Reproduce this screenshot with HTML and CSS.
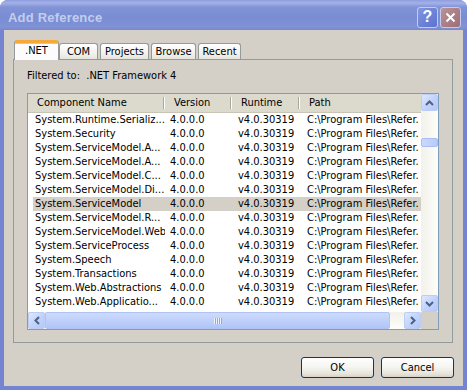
FILE: index.html
```html
<!DOCTYPE html>
<html lang="en">
<head>
    <meta charset="UTF-8">
    <title>Add Reference</title>
    <link rel="stylesheet" href="styles.css">
</head>
<body>
    <div class="window">
        <div class="titlebar">
            <span class="title">Add Reference</span>
            <div class="caption-btns">
                <span class="cap-btn help">?</span>
                <span class="cap-btn close">
                    <svg width="11" height="11" viewBox="0 0 11 11"><path d="M1.5 1.5 L9.5 9.5 M9.5 1.5 L1.5 9.5" stroke="#fff" stroke-width="2" fill="none"/></svg>
                </span>
            </div>
        </div>

        <div class="client">
            <div class="tabs">
                <div class="tab active">.NET</div>
                <div class="tab t-com">COM</div>
                <div class="tab t-projects">Projects</div>
                <div class="tab t-browse">Browse</div>
                <div class="tab t-recent">Recent</div>
            </div>

            <div class="panel">
                <div class="filter">Filtered to:&nbsp; .NET Framework 4</div>

                <div class="listbox">
                    <div class="list-view">
                        <div class="list-header">
                            <div class="hcell h-name">Component Name</div>
                            <div class="hcell h-version">Version</div>
                            <div class="hcell h-runtime">Runtime</div>
                            <div class="hcell h-path">Path</div>
                        </div>
                        <div class="rows">
                            <div class="row"><span class="cell c-name">System.Runtime.Serializ...</span><span class="cell c-version">4.0.0.0</span><span class="cell c-runtime">v4.0.30319</span><span class="cell c-path">C:\Program Files\Refer.</span></div>
                            <div class="row"><span class="cell c-name">System.Security</span><span class="cell c-version">4.0.0.0</span><span class="cell c-runtime">v4.0.30319</span><span class="cell c-path">C:\Program Files\Refer.</span></div>
                            <div class="row"><span class="cell c-name">System.ServiceModel.A...</span><span class="cell c-version">4.0.0.0</span><span class="cell c-runtime">v4.0.30319</span><span class="cell c-path">C:\Program Files\Refer.</span></div>
                            <div class="row"><span class="cell c-name">System.ServiceModel.A...</span><span class="cell c-version">4.0.0.0</span><span class="cell c-runtime">v4.0.30319</span><span class="cell c-path">C:\Program Files\Refer.</span></div>
                            <div class="row"><span class="cell c-name">System.ServiceModel.C...</span><span class="cell c-version">4.0.0.0</span><span class="cell c-runtime">v4.0.30319</span><span class="cell c-path">C:\Program Files\Refer.</span></div>
                            <div class="row"><span class="cell c-name">System.ServiceModel.Di...</span><span class="cell c-version">4.0.0.0</span><span class="cell c-runtime">v4.0.30319</span><span class="cell c-path">C:\Program Files\Refer.</span></div>
                            <div class="row selected"><span class="cell c-name">System.ServiceModel</span><span class="cell c-version">4.0.0.0</span><span class="cell c-runtime">v4.0.30319</span><span class="cell c-path">C:\Program Files\Refer.</span></div>
                            <div class="row"><span class="cell c-name">System.ServiceModel.R...</span><span class="cell c-version">4.0.0.0</span><span class="cell c-runtime">v4.0.30319</span><span class="cell c-path">C:\Program Files\Refer.</span></div>
                            <div class="row"><span class="cell c-name">System.ServiceModel.Web</span><span class="cell c-version">4.0.0.0</span><span class="cell c-runtime">v4.0.30319</span><span class="cell c-path">C:\Program Files\Refer.</span></div>
                            <div class="row"><span class="cell c-name">System.ServiceProcess</span><span class="cell c-version">4.0.0.0</span><span class="cell c-runtime">v4.0.30319</span><span class="cell c-path">C:\Program Files\Refer.</span></div>
                            <div class="row"><span class="cell c-name">System.Speech</span><span class="cell c-version">4.0.0.0</span><span class="cell c-runtime">v4.0.30319</span><span class="cell c-path">C:\Program Files\Refer.</span></div>
                            <div class="row"><span class="cell c-name">System.Transactions</span><span class="cell c-version">4.0.0.0</span><span class="cell c-runtime">v4.0.30319</span><span class="cell c-path">C:\Program Files\Refer.</span></div>
                            <div class="row"><span class="cell c-name">System.Web.Abstractions</span><span class="cell c-version">4.0.0.0</span><span class="cell c-runtime">v4.0.30319</span><span class="cell c-path">C:\Program Files\Refer.</span></div>
                            <div class="row"><span class="cell c-name">System.Web.Applicatio...</span><span class="cell c-version">4.0.0.0</span><span class="cell c-runtime">v4.0.30319</span><span class="cell c-path">C:\Program Files\Refer.</span></div>
                        </div>
                    </div>

                    <div class="vscroll">
                        <span class="sb-btn">
                            <svg width="9" height="6" viewBox="0 0 9 6"><path d="M1 5 L4.5 1.5 L8 5" stroke="#4d6185" stroke-width="2" fill="none"/></svg>
                        </span>
                        <div class="v-track"><span class="v-thumb"></span></div>
                        <span class="sb-btn">
                            <svg width="9" height="6" viewBox="0 0 9 6"><path d="M1 1 L4.5 4.5 L8 1" stroke="#4d6185" stroke-width="2" fill="none"/></svg>
                        </span>
                    </div>

                    <div class="hscroll">
                        <span class="sb-btn">
                            <svg width="6" height="9" viewBox="0 0 6 9"><path d="M5 1 L1.5 4.5 L5 8" stroke="#4d6185" stroke-width="2" fill="none"/></svg>
                        </span>
                        <span class="h-thumb"><span class="grip"></span></span>
                        <div class="h-track"></div>
                        <span class="sb-btn">
                            <svg width="6" height="9" viewBox="0 0 6 9"><path d="M1 1 L4.5 4.5 L1 8" stroke="#4d6185" stroke-width="2" fill="none"/></svg>
                        </span>
                    </div>

                    <div class="corner"></div>
                </div>
            </div>

            <div class="buttons">
                <button type="button" class="btn">OK</button>
                <button type="button" class="btn">Cancel</button>
            </div>
        </div>
    </div>
</body>
</html>
```

FILE: styles.css
```css
body {
    margin: 0;
    background-color: #ffffff;
    font-family: "DejaVu Sans Condensed", "Liberation Sans", sans-serif;
    font-size: 11px;
    color: #000000;
}

.window {
    width: 467px;
    height: 390px;
    display: flex;
    flex-direction: column;
    background-color: #7584d0;
    border-radius: 8px 8px 0 0;
    overflow: hidden;
}

/* title bar (inactive XP caption) */
.titlebar {
    height: 30px;
    box-sizing: border-box;
    padding: 4px 6px 0 8px;
    display: flex;
    align-items: center;
    justify-content: space-between;
    background: linear-gradient(to bottom, #8c9ddf 0, #a4b2e7 3px, #8294d7 7px, #7a8cd2 18px, #8193d7 27px, #7686d0 30px);
}
.title {
    font-family: "Liberation Sans", sans-serif;
    font-weight: bold;
    font-size: 13px;
    color: #c2cdf0;
    letter-spacing: 0.2px;
}
.caption-btns {
    display: flex;
    gap: 2px;
}
.cap-btn {
    width: 21px;
    height: 21px;
    box-sizing: border-box;
    border: 1px solid #c3ccee;
    border-radius: 3px;
    display: flex;
    align-items: center;
    justify-content: center;
}
.help {
    background: linear-gradient(135deg, #8396e0, #6a7fd6 60%, #5f74d0);
    color: #ffffff;
    font-family: "Liberation Sans", sans-serif;
    font-weight: bold;
    font-size: 16px;
}
.close {
    background: linear-gradient(135deg, #b8949a, #a87c82 60%, #9c6f76);
}

/* dialog body */
.client {
    flex: 1;
    margin: 0 4px 4px 4px;
    padding: 10px 9px 0 9px;
    background-color: #d4d0c8;
    display: flex;
    flex-direction: column;
}

.tabs {
    height: 19px;
    margin-left: 1px;
    display: flex;
    align-items: flex-end;
    position: relative;
    z-index: 1;
}
.tab {
    height: 16px;
    box-sizing: border-box;
    border: 1px solid #919b9c;
    border-bottom: none;
    border-radius: 3px 3px 0 0;
    background: linear-gradient(to bottom, #ffffff, #f3f2ee 60%, #e6e4dc);
    margin-right: 2px;
    text-align: center;
    line-height: 15px;
}
.tab.active {
    height: 20px;
    width: 45px;
    margin-right: 0;
    margin-bottom: -1px;
    border-top: 3px solid #f5a93a;
    background: #fcfcfe;
    line-height: 16px;
    box-shadow: inset 0 1px 0 #ffc83c;
}
.t-com { width: 39px; }
.t-projects { width: 49px; }
.t-browse { width: 45px; }
.t-recent { width: 43px; }

.panel {
    width: 440px;
    height: 284px;
    box-sizing: border-box;
    border: 1px solid #919b9c;
    padding: 9px 12px 0 13px;
    background-color: #d4d0c8;
}
.filter {
    line-height: 13px;
}

/* list view */
.listbox {
    margin-top: 11px;
    width: 412px;
    height: 237px;
    box-sizing: border-box;
    border: 1px solid #7f9db9;
    display: grid;
    grid-template-columns: 393px 17px;
    grid-template-rows: 218px 17px;
    background-color: #ffffff;
}
.list-view {
    overflow: hidden;
}
.list-header {
    height: 18px;
    display: flex;
    background-color: #dcd9cd;
    border-bottom: 1px solid #c9c5b6;
}
.hcell {
    padding-left: 9px;
    line-height: 18px;
    box-sizing: border-box;
    white-space: nowrap;
    background-image: linear-gradient(#aca899, #aca899), linear-gradient(#ffffff, #ffffff);
    background-size: 1px 12px, 1px 12px;
    background-position: right 1px top 3px, right 0 top 3px;
    background-repeat: no-repeat;
}
.h-name { width: 137px; }
.h-version { width: 67px; }
.h-runtime { width: 68px; }
.h-path { flex: 1; background-image: none; }

.row {
    height: 14px;
    margin-left: 5px;
    display: flex;
    line-height: 14px;
    white-space: nowrap;
}
.row.selected {
    background-color: #d4d0c8;
}
.cell {
    overflow: hidden;
    box-sizing: border-box;
}
.c-name { width: 132px; padding-left: 2px; }
.c-version { width: 67px; padding-left: 5px; }
.c-runtime { width: 68px; padding-left: 6px; }
.c-path { flex: 1; padding-left: 7px; }

/* scroll bars */
.sb-btn {
    width: 17px;
    height: 17px;
    box-sizing: border-box;
    border: 1px solid #bccdf4;
    border-radius: 2px;
    background: linear-gradient(135deg, #dfe8fe, #c3d3fc 50%, #b4c8f7);
    display: flex;
    align-items: center;
    justify-content: center;
    flex-shrink: 0;
}
.vscroll {
    display: flex;
    flex-direction: column;
    background: linear-gradient(to right, #f2f1ea, #fdfdfa);
}
.v-track {
    flex: 1;
}
.v-thumb {
    display: block;
    height: 9px;
    margin-top: 27px;
    box-sizing: border-box;
    border: 1px solid #a9bdf0;
    border-radius: 2px;
    background: linear-gradient(to right, #cad8fd, #b8cbf8);
}
.hscroll {
    display: flex;
    background: linear-gradient(to bottom, #f2f1ea, #fdfdfa);
}
.h-thumb {
    width: 345px;
    box-sizing: border-box;
    border: 1px solid #b0c4f4;
    border-radius: 2px;
    background: linear-gradient(to bottom, #cddafd, #bccefa 60%, #b1c5f6);
    display: flex;
    align-items: center;
    justify-content: center;
}
.grip {
    width: 8px;
    height: 6px;
    background: repeating-linear-gradient(90deg, #eef3ff 0 1px, #8ea6e4 1px 2px);
}
.h-track {
    flex: 1;
}
.corner {
    background-color: #d4d0c8;
}

/* dialog buttons */
.buttons {
    margin-top: 14px;
    display: flex;
    justify-content: flex-end;
    gap: 7px;
}
.btn {
    width: 73px;
    height: 21px;
    padding: 0;
    border: 1px solid #003c74;
    border-radius: 3px;
    background: linear-gradient(to bottom, #ffffff, #f4f4f0 50%, #e6e3d8 85%, #d6d0c5);
    font-family: "DejaVu Sans Condensed", "Liberation Sans", sans-serif;
    font-size: 11px;
    color: #000000;
}
```
